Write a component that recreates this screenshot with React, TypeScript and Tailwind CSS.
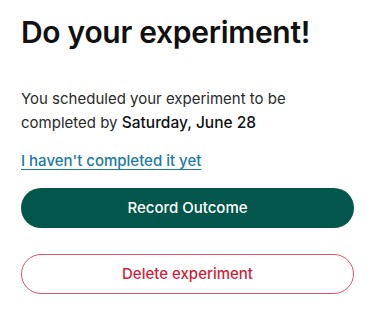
import React from "react";

export default function App() {
  return (
    <div
      className="w-[375px] h-[322px] bg-white px-[21px] text-[#111]"
      style={{ fontFamily: "Inter, 'Noto Sans', sans-serif" }}
    >
      <h1 className="pt-[14px] text-[30px] leading-[36px] font-semibold tracking-[-0.3px]">
        Do your experiment!
      </h1>

      <p className="mt-[37px] text-[15px] leading-[24px] text-[#2a2a2a]">
        You scheduled your experiment to be completed by{" "}
        <span className="text-[15.5px] leading-[24px] font-medium text-[#111]">Saturday, June 28</span>
      </p>

      <a
        href="#"
        className="mt-[15px] block w-fit text-[15px] leading-[22px] font-medium text-[#1b7aa6] underline underline-offset-[3px]"
      >
        I haven't completed it yet
      </a>

      <button className="mt-[16px] w-full h-[40px] rounded-full bg-[#03564c] text-white text-[15px] font-medium">
        Record Outcome
      </button>

      <button className="mt-[26px] w-full h-[40px] rounded-full border border-[#d9546a] bg-white text-[#cf1f3a] text-[15px] font-medium">
        Delete experiment
      </button>
    </div>
  );
}
